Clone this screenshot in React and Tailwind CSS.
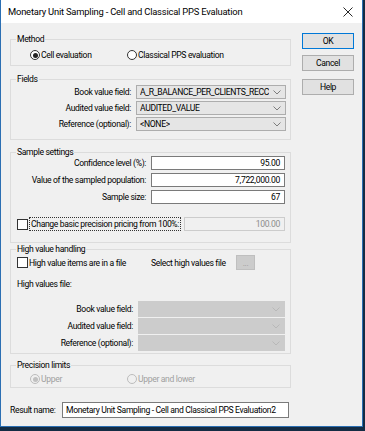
import React from "react"

const font = { fontFamily: 'Roboto, "Noto Sans", sans-serif' }

const Chevron = ({ color = "#606060" }) => (
  <svg width="8" height="5" viewBox="0 0 8 5" className="shrink-0">
    <path d="M0.5 0.5 L4 4 L7.5 0.5" fill="none" stroke={color} strokeWidth="0.9" />
  </svg>
)

const Radio = ({ checked, disabled }) => (
  <span
    className={`w-[10px] h-[10px] rounded-full border flex items-center justify-center shrink-0 ${
      disabled ? "border-[#bcbcbc] bg-[#f0f0f0]" : "border-[#333] bg-white"
    }`}
  >
    {checked && (
      <span className={`w-[5px] h-[5px] rounded-full ${disabled ? "bg-[#c0c0c0]" : "bg-[#222]"}`} />
    )}
  </span>
)

const Checkbox = () => <span className="w-[11px] h-[11px] border border-[#333] bg-white shrink-0" />

const Group = ({ label, className = "", children }) => (
  <div className={`relative border border-[#dcdcdc] ${className}`}>
    <span className="absolute left-[5px] -top-[7px] px-[1px] bg-[#f0f0f0] leading-[12px] text-[#000]">
      {label}
    </span>
    {children}
  </div>
)

const Combo = ({ value, disabled, w = "w-[150px]", h = "h-[14px]" }) => (
  <div
    className={`${w} ${h} border flex items-center justify-between pl-[3px] pr-[4px] ${
      disabled ? "bg-[#cccccc] border-[#cccccc]" : "bg-[#e5e5e5] border-[#adadad]"
    }`}
  >
    <span className="overflow-hidden whitespace-nowrap leading-[12px]">{value}</span>
    <Chevron color={disabled ? "#b5b5b5" : "#707070"} />
  </div>
)

const FieldRow = ({ label, labelW, children }) => (
  <div className="flex items-center">
    <span className={`${labelW} text-right pr-[5px] leading-[12px] whitespace-nowrap`}>{label}</span>
    {children}
  </div>
)

const NumberBox = ({ value }) => (
  <div className="w-[134px] h-[14px] bg-white border border-[#7a7a7a] flex items-center justify-end pr-[4px] leading-[12px]">
    {value}
  </div>
)

const Button = ({ children, primary }) => (
  <button
    className={`w-[52px] h-[16px] bg-[#e1e1e1] border flex items-center justify-center leading-[12px] ${
      primary ? "border-[#0078d7]" : "border-[#adadad]"
    }`}
  >
    {children}
  </button>
)

export default function App() {
  return (
    <div
      className="w-[365px] h-[431px] bg-[#142c44] pr-[2px] pb-[4px] text-[8.6px] tracking-[-0.35px] text-black"
      style={font}
    >
      <div className="w-full h-full flex flex-col border-l border-r border-b border-[#2b6fb3]">
        {/* title bar */}
        <div className="h-[23px] bg-white flex items-center justify-between pl-[7px] pr-[9px] shrink-0">
          <span className="text-[9.4px] tracking-[-0.2px] leading-[14px]">
            Monetary Unit Sampling - Cell and Classical PPS Evaluation
          </span>
          <svg width="10" height="10" viewBox="0 0 10 10">
            <path d="M0.5 0.5 L9.5 9.5 M9.5 0.5 L0.5 9.5" stroke="#111" strokeWidth="0.9" />
          </svg>
        </div>

        <div className="flex-1 bg-[#f0f0f0] flex">
          {/* left column */}
          <div className="w-[281px] ml-[9px] flex flex-col">
            <Group label="Method" className="mt-[16px] h-[27px]">
              <div className="flex items-center pl-[19px] pt-[9px]">
                <div className="flex items-center gap-[1px] w-[97px]">
                  <Radio checked />
                  <span className="leading-[12px]">Cell evaluation</span>
                </div>
                <div className="flex items-center gap-[1px]">
                  <Radio />
                  <span className="leading-[12px]">Classical PPS evaluation</span>
                </div>
              </div>
            </Group>

            <Group label="Fields" className="mt-[13px] h-[61px]">
              <div className="flex flex-col gap-[2px] pt-[5px]">
                <FieldRow label="Book value field:" labelW="w-[125px]">
                  <Combo value="A_R_BALANCE_PER_CLIENTS_RECC" />
                </FieldRow>
                <FieldRow label="Audited value field:" labelW="w-[125px]">
                  <Combo value="AUDITED_VALUE" />
                </FieldRow>
                <FieldRow label="Reference (optional):" labelW="w-[125px]">
                  <Combo value="<NONE>" />
                </FieldRow>
              </div>
            </Group>

            <Group label="Sample settings" className="mt-[12px] h-[91px]">
              <div className="flex flex-col gap-[3px] pt-[3px]">
                <FieldRow label="Confidence level (%):" labelW="w-[140px]">
                  <NumberBox value="95.00" />
                </FieldRow>
                <FieldRow label="Value of the sampled population:" labelW="w-[140px]">
                  <NumberBox value="7,722,000.00" />
                </FieldRow>
                <FieldRow label="Sample size:" labelW="w-[140px]">
                  <NumberBox value="67" />
                </FieldRow>
              </div>
              <div className="flex items-center mt-[13px] pl-[6px]">
                <Checkbox />
                <span className="ml-[1px] w-[152px] h-[14px] border border-dotted border-[#333] flex items-center pl-[1px] leading-[12px] whitespace-nowrap">
                  Change basic precision pricing from 100%:
                </span>
                <div className="ml-[3px] w-[101px] h-[14px] border border-[#cccccc] bg-[#f0f0f0] flex items-center justify-end pr-[4px] text-[#8d8d8d] leading-[12px]">
                  100.00
                </div>
              </div>
            </Group>

            <Group label="High value handling" className="mt-[6px] h-[105px]">
              <div className="flex items-center pt-[5px] pl-[6px] h-[20px]">
                <Checkbox />
                <span className="ml-[1px] w-[122px] leading-[12px] whitespace-nowrap">High value items are in a file</span>
                <span className="leading-[12px] w-[85px] whitespace-nowrap">Select high values file</span>
                <div className="w-[19px] h-[15px] bg-[#cccccc] border border-[#bfbfbf] flex items-center justify-center text-[#9a9a9a] leading-[8px]">
                  ...
                </div>
              </div>
              <div className="pl-[6px] mt-[8px] leading-[12px]">High values file:</div>
              <div className="flex flex-col gap-[1px] mt-[11px]">
                <FieldRow label="Book value field:" labelW="w-[127px]">
                  <Combo disabled w="w-[147px]" h="h-[16px]" />
                </FieldRow>
                <FieldRow label="Audited value field:" labelW="w-[127px]">
                  <Combo disabled w="w-[147px]" h="h-[16px]" />
                </FieldRow>
                <FieldRow label="Reference (optional):" labelW="w-[127px]">
                  <Combo disabled w="w-[147px]" h="h-[16px]" />
                </FieldRow>
              </div>
            </Group>

            <Group label="Precision limits" className="mt-[11px] h-[23px]">
              <div className="flex items-center pl-[19px] pt-[7px] text-[#a0a0a0]">
                <div className="flex items-center gap-[1px] w-[97px]">
                  <Radio checked disabled />
                  <span className="leading-[12px]">Upper</span>
                </div>
                <div className="flex items-center gap-[1px]">
                  <Radio disabled />
                  <span className="leading-[12px]">Upper and lower</span>
                </div>
              </div>
            </Group>

            <div className="flex items-center mt-[14px]">
              <span className="w-[52px] leading-[12px] whitespace-nowrap">Result name:</span>
              <div className="w-[227px] h-[16px] bg-white border border-[#7a7a7a] flex items-center pl-[3px] leading-[12px] whitespace-nowrap">
                Monetary Unit Sampling - Cell and Classical PPS Evaluation2
              </div>
            </div>
          </div>

          {/* right column */}
          <div className="ml-[11px] pt-[10px] flex flex-col">
            <Button primary>OK</Button>
            <div className="mt-[6px]">
              <Button>Cancel</Button>
            </div>
            <div className="mt-[8px]">
              <Button>Help</Button>
            </div>
          </div>
        </div>
      </div>
    </div>
  )
}
